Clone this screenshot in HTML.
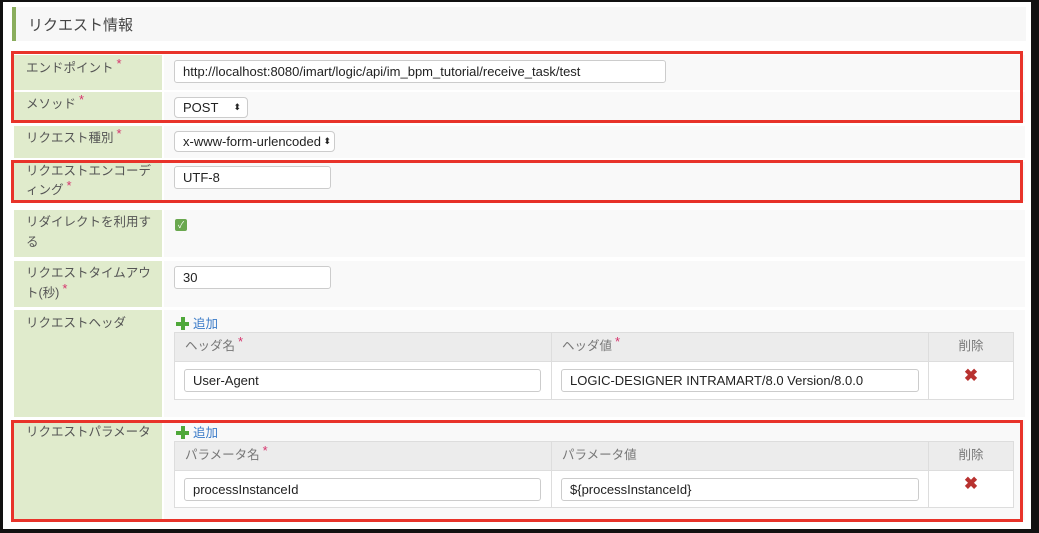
<!DOCTYPE html>
<html><head><meta charset="utf-8"><style>
*{box-sizing:border-box;margin:0;padding:0}
body{width:1039px;height:533px;background:#111;position:relative;overflow:hidden;font-family:"Liberation Sans","Noto Sans CJK JP",sans-serif;font-size:13px;color:#333}
.a{position:absolute}
.page{left:3px;top:2px;width:1028px;height:527px;background:#fff}
.lab{background:#e0ebcc;left:14px;width:148px;color:#555;padding:3px 0 0 12px;line-height:20px;font-size:12.5px}
.val{background:#f9f9f9;left:164px;width:861px}
.st{color:#d6336c;font-size:13px;position:relative;top:-4px;margin-left:3px;line-height:0}
.inp{background:#fff;border:1px solid #ccc;border-radius:3px;padding:0 8px;line-height:21px;font-size:13px;color:#222}
.sel{background:#fff;border:1px solid #ccc;border-radius:4px;padding:0 8px;line-height:19px;font-size:13px;color:#222}
.red{border:3px solid #e8332a}
.th{background:#ececec;border:1px solid #ddd;color:#777;font-size:12.5px;padding-left:10px;line-height:27px}
.td{background:#fff;border:1px solid #ddd}
.x{color:#b8312f;font-size:17px;font-weight:bold}
.add{color:#3a7bc8;font-size:12.5px;line-height:16px}
.plus{display:inline-block;position:relative;width:13px;height:13px;vertical-align:-2px;margin-right:4px}
.plus:before{content:"";position:absolute;left:5px;top:0;width:4px;height:13px;background:#4fa83a}
.plus:after{content:"";position:absolute;left:0;top:5px;width:13px;height:4px;background:#4fa83a}
</style></head><body>
<div class="a page"></div>
<div class="a" style="left:12px;top:7px;width:1014px;height:34px;background:#f7f7f7"></div>
<div class="a" style="left:12px;top:7px;width:4px;height:34px;background:#8aad5c"></div>
<div class="a" style="left:28px;top:14px;font-size:15px;color:#444">リクエスト情報</div>

<div class="a lab" style="top:55px;height:35px;padding-top:3px">エンドポイント<span class="st">*</span></div>
<div class="a val" style="top:55px;height:35px"></div>
<div class="a inp" style="left:174px;top:60px;width:492px;height:23px">http://localhost:8080/imart/logic/api/im_bpm_tutorial/receive_task/test</div>

<div class="a lab" style="top:92px;height:30px;padding-top:2px">メソッド<span class="st">*</span></div>
<div class="a val" style="top:92px;height:30px"></div>
<div class="a sel" style="left:174px;top:97px;width:74px;height:21px">POST <span style="position:absolute;right:6px;font-size:9px">⬍</span></div>

<div class="a lab" style="top:126px;height:32px;padding-top:2px">リクエスト種別<span class="st">*</span></div>
<div class="a val" style="top:126px;height:32px"></div>
<div class="a sel" style="left:174px;top:131px;width:161px;height:21px;padding-left:8px">x-www-form-urlencoded<span style="position:absolute;right:3px;font-size:9px">⬍</span></div>

<div class="a lab" style="top:162px;height:39px;padding-top:0px;line-height:19px">リクエストエンコーデ<br>ィング<span class="st">*</span></div>
<div class="a val" style="top:162px;height:39px"></div>
<div class="a inp" style="left:174px;top:166px;width:157px;height:23px">UTF-8</div>

<div class="a lab" style="top:210px;height:47px;padding-top:2px;line-height:20px">リダイレクトを利用す<br>る</div>
<div class="a val" style="top:210px;height:47px"></div>
<div class="a" style="left:175px;top:219px;width:12px;height:12px;background:#6aa84f;border-radius:2px;color:#fff;font-size:9px;line-height:12px;text-align:center">✓</div>

<div class="a lab" style="top:261px;height:46px;padding-top:2px;line-height:20px">リクエストタイムアウ<br>ト(秒)<span class="st">*</span></div>
<div class="a val" style="top:261px;height:46px"></div>
<div class="a inp" style="left:174px;top:266px;width:157px;height:23px">30</div>

<div class="a lab" style="top:310px;height:107px;padding-top:3px">リクエストヘッダ</div>
<div class="a val" style="top:310px;height:107px"></div>
<div class="a add" style="left:176px;top:316px"><span class="plus"></span>追加</div>
<div class="a th" style="left:174px;top:332px;width:378px;height:30px">ヘッダ名<span class="st">*</span></div>
<div class="a th" style="left:551px;top:332px;width:378px;height:30px">ヘッダ値<span class="st">*</span></div>
<div class="a th" style="left:928px;top:332px;width:86px;height:30px;padding:0;text-align:center">削除</div>
<div class="a td" style="left:174px;top:361px;width:378px;height:39px"></div>
<div class="a td" style="left:551px;top:361px;width:378px;height:39px"></div>
<div class="a td" style="left:928px;top:361px;width:86px;height:39px;text-align:center;padding-top:4px"><span class="x">✖</span></div>
<div class="a inp" style="left:184px;top:369px;width:357px;height:23px">User-Agent</div>
<div class="a inp" style="left:561px;top:369px;width:358px;height:23px">LOGIC-DESIGNER INTRAMART/8.0 Version/8.0.0</div>

<div class="a lab" style="top:420px;height:100px;padding-top:2px">リクエストパラメータ</div>
<div class="a val" style="top:420px;height:100px"></div>
<div class="a add" style="left:176px;top:425px"><span class="plus"></span>追加</div>
<div class="a th" style="left:174px;top:441px;width:378px;height:30px">パラメータ名<span class="st">*</span></div>
<div class="a th" style="left:551px;top:441px;width:378px;height:30px">パラメータ値</div>
<div class="a th" style="left:928px;top:441px;width:86px;height:30px;padding:0;text-align:center">削除</div>
<div class="a td" style="left:174px;top:470px;width:378px;height:38px"></div>
<div class="a td" style="left:551px;top:470px;width:378px;height:38px"></div>
<div class="a td" style="left:928px;top:470px;width:86px;height:38px;text-align:center;padding-top:3px"><span class="x">✖</span></div>
<div class="a inp" style="left:184px;top:478px;width:357px;height:23px">processInstanceId</div>
<div class="a inp" style="left:561px;top:478px;width:358px;height:23px">${processInstanceId}</div>

<div class="a red" style="left:11px;top:51px;width:1012px;height:72px"></div>
<div class="a red" style="left:11px;top:160px;width:1012px;height:43px"></div>
<div class="a red" style="left:11px;top:420px;width:1012px;height:102px"></div>
</body></html>
